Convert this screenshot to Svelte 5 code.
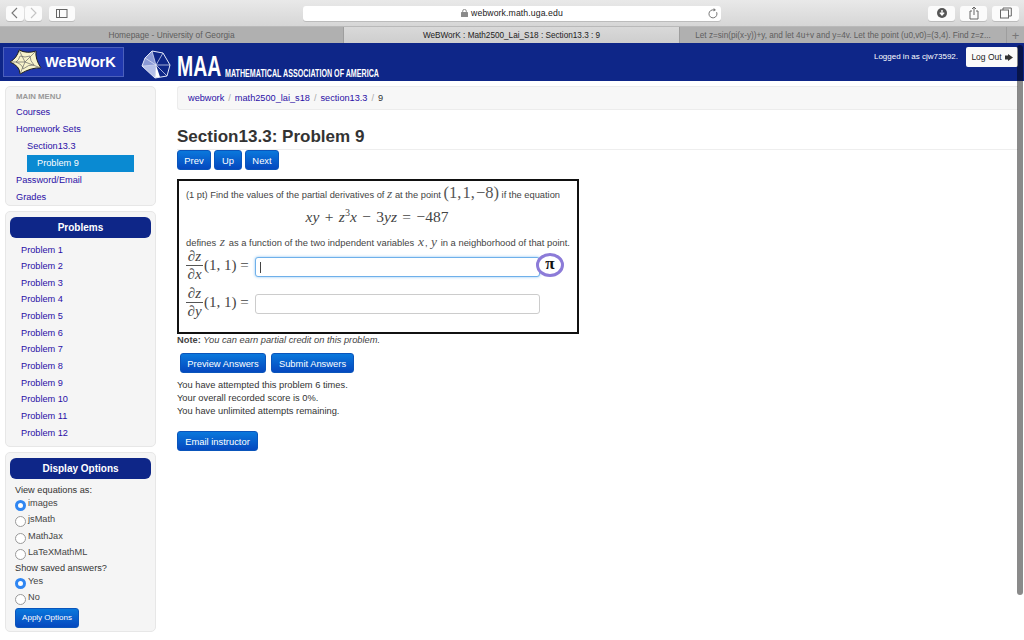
<script>
  const problems = Array.from({ length: 12 }, (_, i) => `Problem ${i + 1}`);
  const viewModes = ['images', 'jsMath', 'MathJax', 'LaTeXMathML'];
  const tabs = [
    'Homepage - University of Georgia',
    'WeBWorK : Math2500_Lai_S18 : Section13.3 : 9',
    'Let z=sin(pi(x-y))+y, and let 4u+v and y=4v. Let the point (u0,v0)=(3,4). Find z=z...'
  ];
</script>

<div class="browser">
  <div class="toolbar">
    <div class="tool-left">
      <div class="btn-pair">
        <button class="tool-btn nav" aria-label="Back">
          <svg width="7" height="12" viewBox="0 0 7 12"><path d="M6 1 1 6l5 5" fill="none" stroke="#777" stroke-width="1.1" /></svg>
        </button>
        <button class="tool-btn nav" aria-label="Forward">
          <svg width="7" height="12" viewBox="0 0 7 12"><path d="M1 1l5 5-5 5" fill="none" stroke="#c4c4c4" stroke-width="1.1" /></svg>
        </button>
      </div>
      <button class="tool-btn side" aria-label="Sidebar">
        <svg width="12" height="9" viewBox="0 0 12 9"><rect x=".5" y=".5" width="10.5" height="8" fill="none" stroke="#666" /><path d="M3.5 1v7" stroke="#666" /></svg>
      </button>
    </div>
    <div class="url">
      <span class="url-text">
        <svg width="7" height="8" viewBox="0 0 7 8"><rect y="3" width="7" height="5" rx=".6" fill="#8a8a8a" /><path d="M1.7 3.5V2.2a1.8 1.8 0 0 1 3.6 0v1.3" fill="none" stroke="#8a8a8a" /></svg>
        webwork.math.uga.edu
      </span>
      <svg class="reload" width="10" height="11" viewBox="0 0 10 11"><path d="M8.6 4.2A4 4 0 1 1 6 2" fill="none" stroke="#777" /><path d="M5.6 0v3.6L8 1.9z" fill="#777" /></svg>
    </div>
    <div class="tool-right">
      <button class="tool-btn right" aria-label="Downloads">
        <svg width="12" height="12" viewBox="0 0 12 12"><circle cx="6" cy="6" r="5" fill="#555" /><path d="M6 3v4.5M3.9 5.6 6 8l2.1-2.4" fill="none" stroke="#fff" stroke-width="1.4" /></svg>
      </button>
      <button class="tool-btn right" aria-label="Share">
        <svg width="10" height="14" viewBox="0 0 10 14"><path d="M3 5H1v8h8V5H7M5 9V1M3 3l2-2 2 2" fill="none" stroke="#666" /></svg>
      </button>
      <button class="tool-btn right" aria-label="Tabs">
        <svg width="12" height="12" viewBox="0 0 12 12"><rect x=".5" y="3" width="8" height="8" fill="none" stroke="#666" /><path d="M3 3V1h8.300v8H8.500" fill="none" stroke="#666" /></svg>
      </button>
    </div>
  </div>

  <div class="tabs">
    {#each tabs as tab, i}
      <div class="tab" class:active={i === 1}><span>{tab}</span></div>
    {/each}
    <div class="tab-plus">+</div>
  </div>

  <div class="page">
    <header class="masthead">
      <div class="ww-logo">
        <svg width="33" height="26" viewBox="0 0 33 26">
          <path d="M10 1Q18 5 27 2 26 10 32 19 23 18 11 25 11 17 1 13 8 9 10 1Z" fill="#f7f3cb" stroke="#1c1c1c" stroke-width="1" />
          <path d="M10 1 16 13 27 2M1 13 16 13 32 19M11 25 16 13M11 7Q16 9 21 7 21 12 25 16 20 15 14 20 14 16 7 13 10 11 11 7Z" fill="none" stroke="#666" stroke-width=".7" />
        </svg>
        <span>WeBWorK</span>
      </div>
      <div class="maa">
        <svg width="31" height="30" viewBox="0 0 31 30">
          <path d="M4 8 11 1 15 15 1 16Z" fill="#8b9ad6" />
          <path d="M1 16 15 15 14 28Z" fill="#b5c0e8" />
          <path d="M15 15 19 27 14 28Z" fill="#fff" />
          <path d="M11 1 22 3 29 15 26 26 14 28 1 16 4 8Z" fill="none" stroke="#e4e8f8" stroke-width="1" />
          <path d="M11 1 15 15 22 3M15 15 29 15M15 15 26 26M15 15 14 28M15 15 1 16M4 8 15 15" fill="none" stroke="#e4e8f8" stroke-width=".7" />
        </svg>
        <span class="maa-big">MAA</span>
        <span class="maa-small">MATHEMATICAL ASSOCIATION OF AMERICA</span>
      </div>
      <div class="login">
        <span>Logged in as cjw73592.</span>
        <button class="logout">Log Out <svg width="8" height="7" viewBox="0 0 8 7"><path d="M0 1.500h3V0l5 3.500L3 7V5.500H0z" fill="#333" /></svg></button>
      </div>
    </header>

    <div class="columns">
      <aside class="sidebar">
        <nav class="well menu">
          <div class="menu-title">MAIN MENU</div>
          <a href="#c">Courses</a>
          <a href="#h">Homework Sets</a>
          <a href="#s" class="lvl2">Section13.3</a>
          <a href="#p" class="lvl2 current">Problem 9</a>
          <a href="#e">Password/Email</a>
          <a href="#g">Grades</a>
        </nav>

        <div class="well problems">
          <div class="panel-head">Problems</div>
          {#each problems as p}
            <a href="#p">{p}</a>
          {/each}
        </div>

        <div class="well options">
          <div class="panel-head">Display Options</div>
          <div class="opt-label">View equations as:</div>
          {#each viewModes as mode, i}
            <div class="radio"><span class="dot" class:on={i === 0}></span><span>{mode}</span></div>
          {/each}
          <div class="opt-label second">Show saved answers?</div>
          <div class="radio"><span class="dot on"></span><span>Yes</span></div>
          <div class="radio"><span class="dot"></span><span>No</span></div>
          <button class="blue apply">Apply Options</button>
        </div>
      </aside>

      <main class="content">
        <div class="crumbs">
          <a href="#w">webwork</a><i>/</i><a href="#m">math2500_lai_s18</a><i>/</i><a href="#s">section13.3</a><i>/</i><span>9</span>
        </div>
        <h1>Section13.3: Problem 9</h1>
        <div class="pager">
          <button class="blue">Prev</button>
          <button class="blue">Up</button>
          <button class="blue">Next</button>
        </div>

        <div class="problem">
          <p class="line1">(1 pt) Find the values of the partial derivatives of <em class="m tight">z</em> at the point <span class="m big">(1, 1, −8)</span> if the equation</p>
          <div class="equation"><em>xy</em> + <em>z</em><sup>3</sup><em>x</em> − 3<em>yz</em> = −487</div>
          <p class="line2">defines <em class="m">z</em> as a function of the two indpendent variables <em class="m">x</em>, <em class="m">y</em> in a neighborhood of that point.</p>

          <div class="answer">
            <span class="frac"><span class="num">∂<em>z</em></span><span class="den">∂<em>x</em></span></span>
            <span class="at">(1, 1) =</span>
            <div class="input focus"><span class="caret"></span></div>
            <span class="pi">π</span>
          </div>
          <div class="answer">
            <span class="frac"><span class="num">∂<em>z</em></span><span class="den">∂<em>y</em></span></span>
            <span class="at">(1, 1) =</span>
            <div class="input"></div>
          </div>
        </div>

        <p class="note"><b>Note:</b> <em>You can earn partial credit on this problem.</em></p>

        <div class="submit">
          <button class="blue">Preview Answers</button>
          <button class="blue">Submit Answers</button>
        </div>

        <div class="attempts">
          <div>You have attempted this problem 6 times.</div>
          <div>Your overall recorded score is 0%.</div>
          <div>You have unlimited attempts remaining.</div>
        </div>

        <button class="blue email">Email instructor</button>
      </main>
    </div>

    <div class="scrollbar"></div>
  </div>
</div>

<style>
  :global(body) {
    margin: 0;
    background: #fff;
  }
  .browser {
    width: 1024px;
    height: 640px;
    overflow: hidden;
    font-family: "Liberation Sans", Arial, sans-serif;
    color: #333;
    display: flex;
    flex-direction: column;
  }
  button {
    font-family: inherit;
    cursor: pointer;
  }

  /* safari chrome */
  .toolbar {
    height: 26px;
    background: linear-gradient(#e9e9e9, #d6d6d6);
    display: grid;
    grid-template-columns: 303px 418px 1fr;
    align-items: center;
    flex: none;
  }
  .tool-left {
    display: flex;
    gap: 7px;
    padding-left: 6px;
  }
  .btn-pair {
    display: flex;
    gap: 1px;
  }
  .tool-btn {
    height: 15px;
    padding: 0;
    border: none;
    border-radius: 3px;
    background: #fbfbfb;
    box-shadow: 0 1px 0 #bcbcbc;
    display: flex;
    align-items: center;
    justify-content: center;
  }
  .nav {
    width: 17.500px;
  }
  .side {
    width: 26px;
  }
  .url {
    height: 15px;
    background: #fff;
    border-radius: 3px;
    box-shadow: 0 1px 0 #bcbcbc;
    position: relative;
    display: flex;
    align-items: center;
    justify-content: center;
    font-size: 8.700px;
    color: #222;
  }
  .url-text {
    display: flex;
    align-items: center;
    gap: 3px;
    letter-spacing: .1px;
  }
  .reload {
    position: absolute;
    right: 3px;
    top: 2px;
  }
  .tool-right {
    display: flex;
    justify-content: flex-end;
    gap: 5px;
    padding-right: 5px;
  }
  .right {
    width: 27px;
  }

  .tabs {
    height: 17px;
    flex: none;
    display: grid;
    grid-template-columns: 344px 336px 327px 1fr;
    background: #b0b0b0;
    border-top: 1px solid #b9b9b9;
    box-sizing: border-box;
    font-size: 8.200px;
    color: #5e5e5e;
  }
  .tab {
    display: flex;
    align-items: center;
    justify-content: center;
    border-right: 1px solid #9e9e9e;
    white-space: nowrap;
    overflow: hidden;
  }
  .tab:first-child {
    font-size: 8.350px;
  }
  .tab.active {
    background: linear-gradient(#d9d9d9, #cecece);
    color: #222;
  }
  .tab-plus {
    display: flex;
    align-items: center;
    justify-content: center;
    font-size: 13px;
    color: #777;
  }

  .page {
    flex: 1;
    position: relative;
    min-height: 0;
    font-size: 9.200px;
  }

  /* webwork header */
  .masthead {
    height: 38px;
    background: #0e2688;
    display: flex;
    align-items: flex-start;
  }
  .ww-logo {
    width: 121px;
    height: 30px;
    margin: 4px 0 0 3px;
    background: #2038ae;
    border: 1px solid #4c60bb;
    box-sizing: border-box;
    display: flex;
    align-items: center;
    gap: 3px;
    padding-left: 5px;
    color: #fff;
    font-weight: bold;
    font-size: 14.600px;
  }
  .maa {
    margin: 6px 0 0 17px;
    display: flex;
    align-items: flex-end;
    color: #fff;
    height: 31px;
  }
  .maa-big {
    font-size: 29px;
    line-height: 28px;
    font-weight: bold;
    margin-left: 5px;
    transform: scaleX(.67);
    transform-origin: left;
    width: 48px;
  }
  .maa-small {
    font-size: 10.500px;
    line-height: 12px;
    font-weight: bold;
    margin-bottom: 1px;
    transform: scaleX(.68);
    transform-origin: left;
    white-space: nowrap;
    width: 154px;
  }
  .login {
    margin-left: auto;
    display: flex;
    align-items: flex-start;
    gap: 8px;
    padding: 4px 6px 0 0;
    color: #fff;
    font-size: 8px;
  }
  .login span {
    margin-top: 5px;
  }
  .logout {
    width: 52px;
    height: 20px;
    padding: 0;
    background: #fafafa;
    border: none;
    border-radius: 2px;
    font-size: 8.500px;
    color: #222;
    display: flex;
    align-items: center;
    justify-content: center;
    gap: 3px;
  }

  .columns {
    display: grid;
    grid-template-columns: 177px 1fr;
  }

  /* sidebar */
  .sidebar {
    padding: 5px 0 0 5px;
    display: flex;
    flex-direction: column;
    gap: 5px;
    width: 151px;
  }
  .well {
    background: #f5f5f5;
    border: 1px solid #e7e7e7;
    border-radius: 5px;
    box-sizing: border-box;
  }
  .sidebar a {
    color: #2a0fa6;
    text-decoration: none;
    display: block;
  }
  .menu {
    height: 120px;
    padding: 3px 0 0 10px;
  }
  .menu-title {
    font-size: 7.800px;
    font-weight: bold;
    color: #999;
    height: 14px;
    line-height: 14px;
  }
  .menu a {
    height: 17px;
    line-height: 17px;
  }
  .menu .lvl2 {
    margin-left: 11px;
  }
  .menu .current {
    background: #0a8ad2;
    color: #fff;
    width: 107px;
    padding-left: 10px;
    box-sizing: border-box;
  }
  .panel-head {
    height: 21px;
    margin: 5px 4px 0;
    background: #0e2688;
    border-radius: 6px;
    color: #fff;
    font-weight: bold;
    font-size: 10px;
    display: flex;
    align-items: center;
    justify-content: center;
  }
  .problems {
    height: 236px;
  }
  .problems .panel-head {
    margin-bottom: 3.500px;
  }
  .problems a {
    height: 16.650px;
    line-height: 16.650px;
    padding-left: 15px;
  }
  .options {
    height: 180px;
  }
  .opt-label {
    margin: 5px 0 1.500px 9px;
    height: 12px;
    line-height: 12px;
  }
  .opt-label.second {
    margin-top: -1.500px;
  }
  .radio {
    display: flex;
    align-items: flex-start;
    margin-left: 9px;
    height: 16.500px;
    line-height: 11px;
    gap: 2px;
    color: #444;
  }
  .dot {
    width: 11px;
    height: 11px;
    margin-top: 2px;
    border-radius: 50%;
    background: #fff;
    border: 1px solid #9a9a9a;
    box-sizing: border-box;
    flex: none;
  }
  .dot.on {
    background: #fff;
    border: 3.500px solid #2f86f2;
  }
  .blue.apply {
    display: block;
    margin: -1px 0 0 9px;
    height: 20px;
    width: 64px;
    font-size: 8px;
  }

  /* main column */
  .content {
    padding-top: 5px;
    position: relative;
  }
  .crumbs {
    height: 24px;
    box-sizing: border-box;
    background: #f7f7f7;
    border: 1px solid #ececec;
    border-right: none;
    border-radius: 3px 0 0 3px;
    padding-left: 10px;
    display: flex;
    align-items: center;
    color: #333;
    margin-right: 6px;
  }
  .crumbs a {
    color: #2a0fa6;
    text-decoration: none;
  }
  .crumbs i {
    font-style: normal;
    color: #aaa;
    margin: 0 4px;
  }
  h1 {
    margin: 15px 6px 0 0;
    font-size: 17.050px;
    line-height: 23px;
    height: 24px;
    color: #333;
    border-bottom: 1px solid #eee;
  }
  .pager {
    display: flex;
    gap: 3px;
  }
  .blue {
    height: 20px;
    padding: 0;
    background: linear-gradient(#0a78dc, #0548bf);
    border: 1px solid #0a55bb;
    border-radius: 3px;
    color: #fff;
    font-size: 9.400px;
    box-sizing: border-box;
  }
  .pager .blue {
    width: 34px;
  }
  .pager .blue:nth-child(2) {
    width: 28px;
  }
  .problem {
    width: 402px;
    height: 155px;
    box-sizing: border-box;
    margin-top: 9px;
    border: 2px solid #111;
    padding: 0 7px;
    font-size: 9.300px;
    color: #444;
    position: relative;
  }
  .problem p {
    margin: 0;
    white-space: nowrap;
  }
  .m {
    font-family: "Liberation Serif", serif;
    font-size: 13.500px;
    color: #555;
    padding: 0 1px;
  }
  .m.tight {
    padding: 0;
  }
  .m.big {
    font-size: 16.500px;
    line-height: 18px;
    padding: 0;
    word-spacing: -3px;
  }
  .problem .line1 {
    height: 26px;
    line-height: 26px;
    margin-bottom: 1px;
  }
  .equation {
    text-align: center;
    font-family: "Liberation Serif", serif;
    font-size: 15.500px;
    height: 18px;
    line-height: 18px;
    word-spacing: 1.500px;
    color: #444;
    padding-right: 2px;
  }
  .equation sup {
    font-size: 10px;
    line-height: 0;
  }
  .problem .line2 {
    margin: 10px 0 -2px;
    height: 12px;
    line-height: 12px;
    font-size: 9.400px;
  }
  .answer {
    display: flex;
    align-items: center;
    height: 38px;
    margin-bottom: -1px;
    position: relative;
    font-family: "Liberation Serif", serif;
    font-size: 14px;
  }
  .frac {
    display: inline-flex;
    flex-direction: column;
    align-items: center;
    font-size: 15px;
    line-height: 17px;
    width: 17px;
    flex: none;
  }
  .num {
    border-bottom: 1px solid #555;
    width: 100%;
    text-align: center;
    white-space: nowrap;
  }
  .den {
    white-space: nowrap;
  }
  .at {
    white-space: nowrap;
    margin-left: 1px;
    width: 46px;
    font-size: 15px;
    flex: none;
  }
  .input {
    width: 285px;
    height: 20px;
    box-sizing: border-box;
    background: #fff;
    border: 1px solid #ccc;
    border-radius: 3px;
    margin: 4px 0 0 5px;
    position: relative;
    flex: none;
  }
  .input.focus {
    border-color: #6fb0ea;
    box-shadow: 0 0 3px #8cc4f2;
  }
  .caret {
    position: absolute;
    left: 4px;
    top: 4px;
    width: 1px;
    height: 11px;
    background: #444;
  }
  .pi {
    position: absolute;
    left: 350px;
    top: 7px;
    width: 28px;
    height: 24px;
    box-sizing: border-box;
    border: 3px solid #8c7bd8;
    border-radius: 50%;
    background: #fff;
    color: #111;
    font-size: 17px;
    font-weight: bold;
    line-height: 16px;
    text-align: center;
  }
  .note {
    margin: 1px 0 0;
    font-size: 9.300px;
    line-height: 11px;
    color: #444;
  }
  .submit {
    display: flex;
    gap: 5px;
    margin: 7px 0 0 3px;
  }
  .submit .blue {
    width: 86px;
  }
  .submit .blue:nth-child(2) {
    width: 83px;
  }
  .attempts {
    margin-top: 6px;
    line-height: 13px;
    font-size: 9.300px;
    color: #333;
  }
  .email {
    display: block;
    margin-top: 13px;
    width: 81px;
  }

  .scrollbar {
    position: absolute;
    right: 1px;
    top: 2px;
    width: 6px;
    height: 550px;
    background: rgba(0, 0, 0, .46);
    border-radius: 3px;
  }
</style>
